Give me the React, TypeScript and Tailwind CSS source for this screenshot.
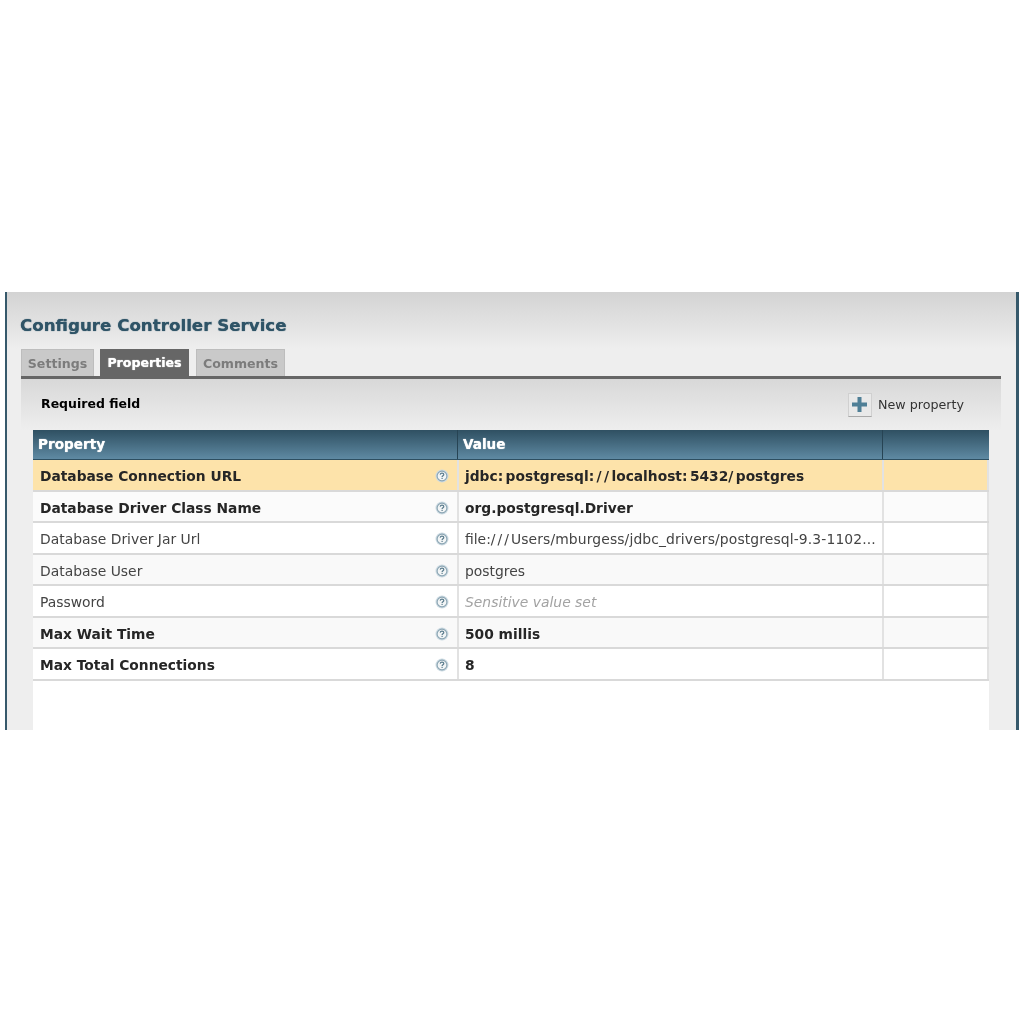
import React from 'react'

const Wide = ({ children }: { children: React.ReactNode }) => <span className="tracking-[2.4px]">{children}</span>

const rows = [
  {
    name: 'Database Connection URL',
    value: (
      <>
        jdbc<Wide>:</Wide>postgresql<Wide>://</Wide>localhost<Wide>:</Wide>5432<Wide>/</Wide>postgres
      </>
    ),
    bold: true,
    bg: 'bg-[#fde3aa]',
  },
  { name: 'Database Driver Class Name', value: 'org.postgresql.Driver', bold: true, bg: 'bg-[#fbfbfb]' },
  {
    name: 'Database Driver Jar Url',
    value: (
      <>
        file:<span className="tracking-[2px]">///</span>
        <span className="tracking-[0.12px]">Users/mburgess/jdbc_drivers/postgresql-9.3-1102...</span>
      </>
    ),
    bold: false,
    bg: 'bg-white',
  },
  { name: 'Database User', value: 'postgres', bold: false, bg: 'bg-[#f9f9f9]' },
  { name: 'Password', value: 'Sensitive value set', bold: false, bg: 'bg-white', muted: true },
  { name: 'Max Wait Time', value: '500 millis', bold: true, bg: 'bg-[#f9f9f9]' },
  { name: 'Max Total Connections', value: '8', bold: true, bg: 'bg-white' },
]

const HelpIcon = () => (
  <svg width="14" height="14" viewBox="0 0 14 14" className="shrink-0 -mt-[1px]">
    <circle cx="7" cy="7" r="6.500" fill="#ccdae2" />
    <circle cx="7" cy="7" r="4.900" fill="#f2f5f6" stroke="#8aa4b2" strokeWidth="1.100" />
    <path d="M5.200 5.600c.1-.9.9-1.400 1.800-1.400 1 0 1.800.5 1.800 1.400 0 1.200-1.700 1.200-1.700 2.400" fill="none" stroke="#5c7d8e" strokeWidth="1.200" />
    <rect x="6.500" y="8.800" width="1.200" height="1.200" fill="#5c7d8e" />
  </svg>
)

const Tab = ({ label, active }: { label: string; active?: boolean }) => (
  <div
    className={
      active
        ? 'h-[27px] w-[89px] pt-[2px] flex items-center justify-center bg-[#666666] text-white text-[12.6px] font-bold [text-shadow:0_0_1px_#ffffff]'
        : 'h-[27px] pt-[2px] flex items-center justify-center bg-[#c9c9c9] border border-[#bdbdbd] border-b-0 text-[#7c7c7c] text-[12.6px] font-bold'
    }
  >
    {label}
  </div>
)

const App = () => {
  return (
    <div className="w-[1024px] h-[1024px] bg-white pt-[292px] pl-[5px] font-['DejaVu_Sans',sans-serif] blur-[0.5px]">
      <div className="w-[1014px] h-[438px] border-l-2 border-r-[3px] border-[#36596b] bg-[#eeeeee] flex flex-col">
        <div className="h-[57px] px-[13px] pt-[22px] bg-gradient-to-b from-[#d3d3d3] to-[#eeeeee]">
          <div className="text-[#2f5467] text-[16.7px] leading-[22px] font-bold whitespace-nowrap [text-shadow:0_0_1px_#2f5467]">Configure Controller Service</div>
        </div>
        <div className="ml-[14px] mr-[15px] flex flex-col">
          <div className="flex items-end gap-[6px] h-[27px]">
            <div className="w-[73px]"><Tab label="Settings" /></div>
            <Tab label="Properties" active />
            <div className="w-[89px] ml-px"><Tab label="Comments" /></div>
          </div>
          <div className="h-[3px] bg-[#666666]" />
          <div className="h-[51px] pl-[20px] pr-[37px] flex items-center justify-between bg-gradient-to-b from-[#d8d8d8] to-[#eeeeee]">
            <div className="text-black text-[12.5px] font-bold">Required field</div>
            <div className="flex items-center gap-[6px]">
              <div className="w-[24px] h-[24px] flex items-center justify-center bg-[#e9e9e9] border border-[#d0d0d0] border-b-[#a9a9a9]">
                <svg width="15" height="15" viewBox="0 0 15 15">
                  <path d="M5.500 0h4v5.500H15v4H9.500V15h-4V9.500H0v-4h5.500z" fill="#4f7f96" />
                </svg>
              </div>
              <div className="text-[#333333] text-[12.7px]">New property</div>
            </div>
          </div>
        </div>
        <div className="ml-[26px] mr-[27px] flex-1 bg-white flex flex-col">
          <div className="h-[30px] flex items-stretch border-b border-[#2e4f61] bg-gradient-to-b from-[#2f5062] to-[#5f8aa3] text-white text-[13.6px] font-bold [text-shadow:0_0_1px_#ffffff]">
            <div className="w-[424px] px-[5px] flex items-center">Property</div>
            <div className="w-[425px] px-[5px] flex items-center border-l border-[#274454]">Value</div>
            <div className="flex-1 border-l border-[#274454]" />
          </div>
          {rows.map((row) => (
            <div key={row.name} className={`h-[31.5px] flex items-stretch border-b-2 border-[#d9d9d9] ${row.bg} ${row.bold ? 'text-[13.8px] font-bold text-[#262626]' : 'text-[13.9px] text-[#444444]'}`}>
              <div className="w-[424px] pl-[7px] pr-[8px] pt-[4px] flex items-center justify-between">
                <span className="whitespace-nowrap">{row.name}</span>
                <HelpIcon />
              </div>
              <div className="w-[425px] pl-[6px] pr-[2px] pt-[4px] flex items-center border-l-2 border-[#e2e2e2] min-w-0">
                <span className={`whitespace-nowrap ${row.muted ? 'italic text-[#a3a3a3]' : ''}`}>{row.value}</span>
              </div>
              <div className="flex-1 border-l-2 border-r-2 border-[#e2e2e2]" />
            </div>
          ))}
        </div>
      </div>
    </div>
  )
}

export default App
